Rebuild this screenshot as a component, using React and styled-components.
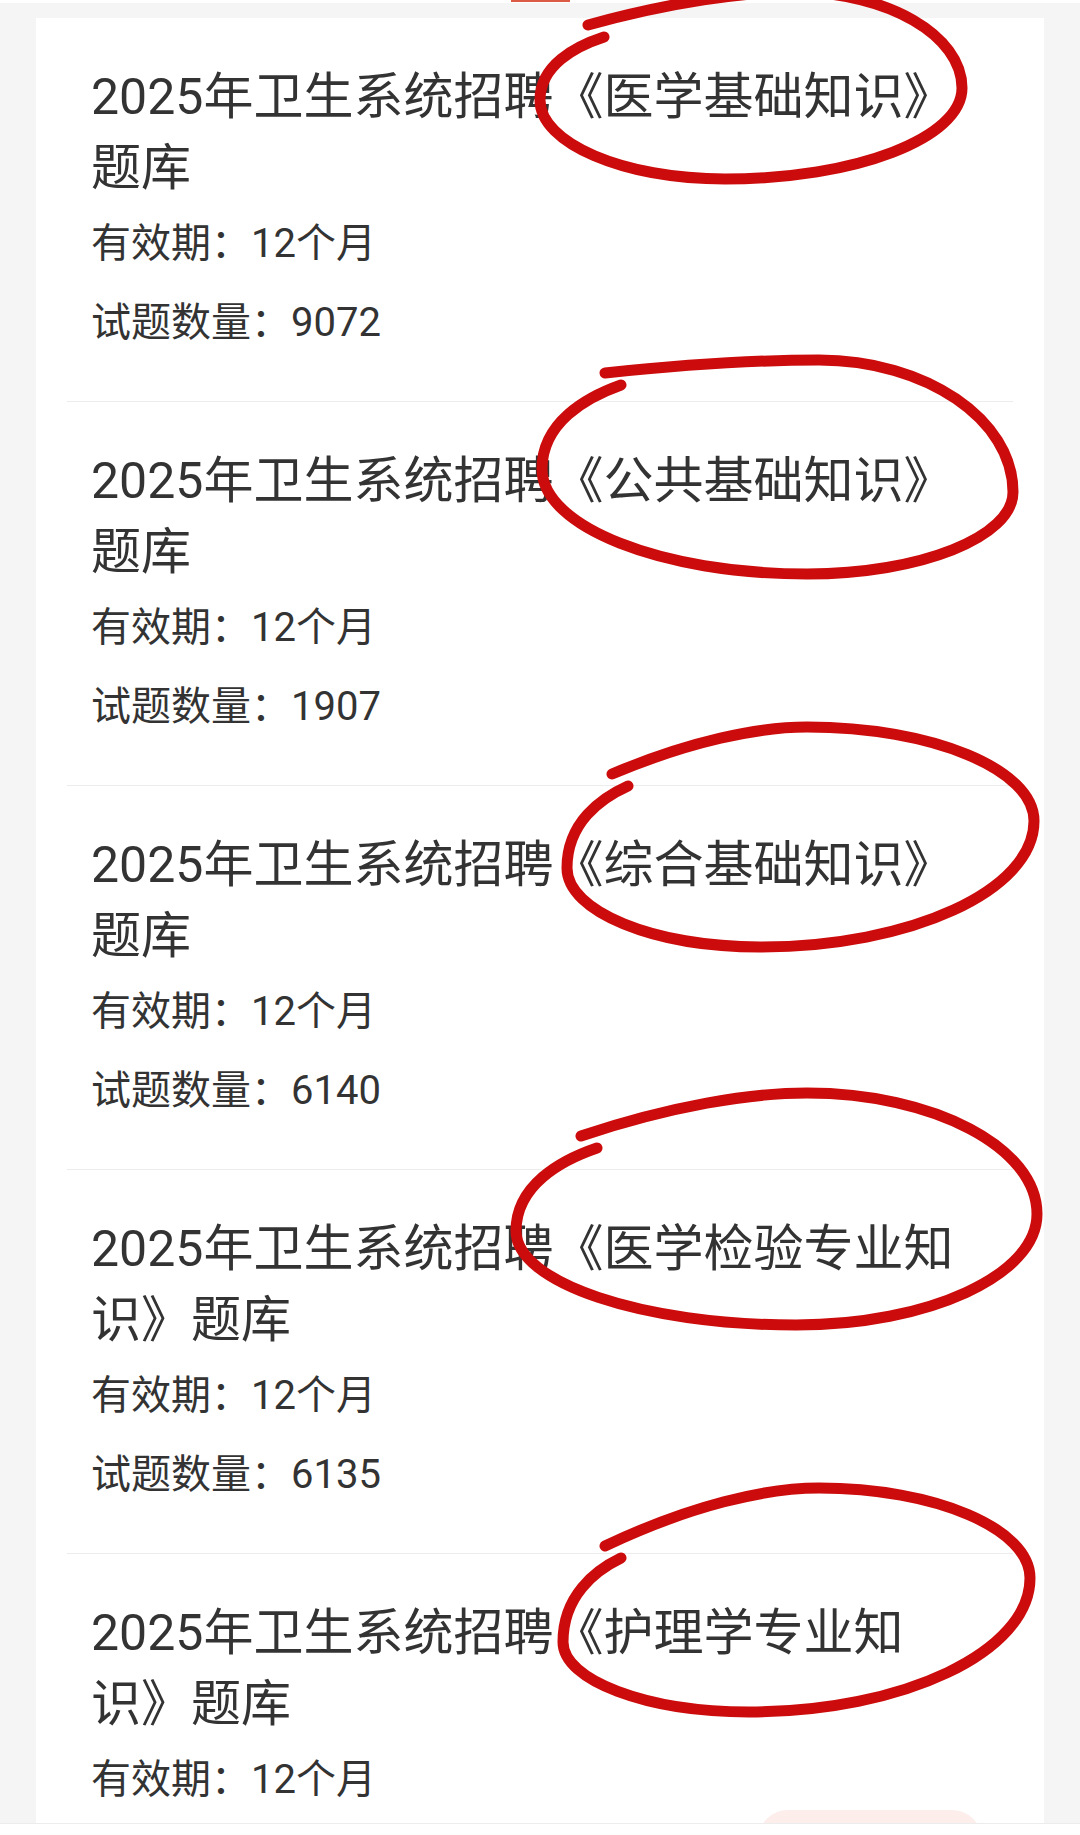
import React from 'react';
import styled, { createGlobalStyle } from 'styled-components';

const GlobalStyle = createGlobalStyle`
  html, body {
    margin: 0;
    padding: 0;
    background: #f5f5f5;
  }
  body {
    font-family: Roboto, "Noto Sans CJK SC", "Noto Sans", sans-serif;
  }
  #root {
    width: 1080px;
    height: 1835px;
    overflow: hidden;
  }
`;

const Page = styled.div`
  position: relative;
  width: 1080px;
  height: 1835px;
  overflow: hidden;
  background: #f5f5f5;
  display: flex;
  flex-direction: column;
`;

const TabStrip = styled.div`
  flex-shrink: 0;
  height: 3px;
  background: #ffffff;
  display: flex;
  justify-content: center;
`;

const TabIndicator = styled.div`
  width: 59px;
  height: 2px;
  background: #dc5b45;
`;

const Card = styled.div`
  margin: 15px 36px 0;
  background: #ffffff;
  display: flex;
  flex-direction: column;
`;

const Item = styled.div`
  position: relative;
  margin: 0 31px;
  padding: 44px 24px 39px;
  border-bottom: 1px solid #ececec;
`;

const Title = styled.div`
  font-size: 50px;
  line-height: 71px;
  color: #333333;
  text-spacing-trim: space-all;
`;

const MetaList = styled.div`
  display: flex;
  flex-direction: column;
`;

const MetaRow = styled.div`
  font-size: 40px;
  line-height: 79px;
  color: #333333;
  text-spacing-trim: space-all;
`;

const LoopLayer = styled.svg`
  position: absolute;
  left: 0;
  top: 0;
  width: 100%;
  height: 100%;
  overflow: visible;
  pointer-events: none;
  z-index: 2;
`;

const GhostButton = styled.div`
  position: absolute;
  left: 758px;
  top: 1810px;
  width: 224px;
  height: 60px;
  border-radius: 30px;
  background: #fdeeec;
  z-index: 1;
`;

const BottomBar = styled.div`
  position: absolute;
  left: 0;
  right: 0;
  bottom: 0;
  height: 12px;
  box-sizing: border-box;
  background: #ffffff;
  border-top: 1px solid #ececec;
  z-index: 3;
`;

function loopPath({ tip, top, right, bottom, left }) {
  const k = 0.55;
  const [tx, ty] = tip;
  const [Tx, Ty] = top;
  const [Rx, Ry] = right;
  const [Bx, By] = bottom;
  const [Lx, Ly] = left;
  const Ex = tx + 16;
  const Ey = ty + 12;
  const r = (n) => n.toFixed(1);
  return [
    `M ${r(tx)} ${r(ty)}`,
    `C ${r(tx + 0.4 * (Tx - tx))} ${r(ty - 0.7 * (ty - Ty))}, ${r(Tx - 0.25 * (Tx - tx))} ${r(Ty)}, ${r(Tx)} ${r(Ty)}`,
    `C ${r(Tx + k * (Rx - Tx))} ${r(Ty)}, ${r(Rx)} ${r(Ry - k * (Ry - Ty))}, ${r(Rx)} ${r(Ry)}`,
    `C ${r(Rx)} ${r(Ry + k * (By - Ry))}, ${r(Bx + k * (Rx - Bx))} ${r(By)}, ${r(Bx)} ${r(By)}`,
    `C ${r(Bx - k * (Bx - Lx))} ${r(By)}, ${r(Lx)} ${r(Ly + k * (By - Ly))}, ${r(Lx)} ${r(Ly)}`,
    `C ${r(Lx)} ${r(Ly - 0.55 * (Ly - Ey))}, ${r(Ex - 0.45 * (Ex - Lx))} ${r(Ey + 0.15 * (Ly - Ey))}, ${r(Ex)} ${r(Ey)}`,
  ].join(' ');
}

const banks = [
  {
    title: '2025年卫生系统招聘《医学基础知识》题库',
    valid: '12个月',
    count: '9072',
    loop: { tip: [521, 7], top: [729, -26], right: [895, 70], bottom: [658, 161], left: [473, 82] },
  },
  {
    title: '2025年卫生系统招聘《公共基础知识》题库',
    valid: '12个月',
    count: '1907',
    loop: { tip: [538, -29], top: [752, -42], right: [946, 90], bottom: [740, 172], left: [475, 67] },
  },
  {
    title: '2025年卫生系统招聘《综合基础知识》题库',
    valid: '12个月',
    count: '6140',
    loop: { tip: [545, -12], top: [740, -59], right: [967, 35], bottom: [693, 161], left: [500, 82] },
  },
  {
    title: '2025年卫生系统招聘《医学检验专业知识》题库',
    valid: '12个月',
    count: '6135',
    loop: { tip: [514, -34], top: [740, -77], right: [970, 44], bottom: [729, 155], left: [449, 61] },
  },
  {
    title: '2025年卫生系统招聘《护理学专业知识》题库',
    valid: '12个月',
    count: null,
    loop: { tip: [538, -8], top: [752, -66], right: [963, 24], bottom: [682, 158], left: [496, 88] },
  },
];

function BankItem({ bank }) {
  return (
    <Item>
      <Title>{bank.title}</Title>
      <MetaList>
        <MetaRow>有效期：{bank.valid}</MetaRow>
        {bank.count && <MetaRow>试题数量：{bank.count}</MetaRow>}
      </MetaList>
      <LoopLayer>
        <path
          d={loopPath(bank.loop)}
          fill="none"
          stroke="#cc0c0c"
          strokeWidth="11"
          strokeLinecap="round"
          strokeLinejoin="round"
        />
      </LoopLayer>
    </Item>
  );
}

export default function App() {
  return (
    <>
      <GlobalStyle />
      <Page>
        <TabStrip>
          <TabIndicator />
        </TabStrip>
        <Card>
          {banks.map((b) => (
            <BankItem key={b.title} bank={b} />
          ))}
        </Card>
        <GhostButton />
        <BottomBar />
      </Page>
    </>
  );
}
